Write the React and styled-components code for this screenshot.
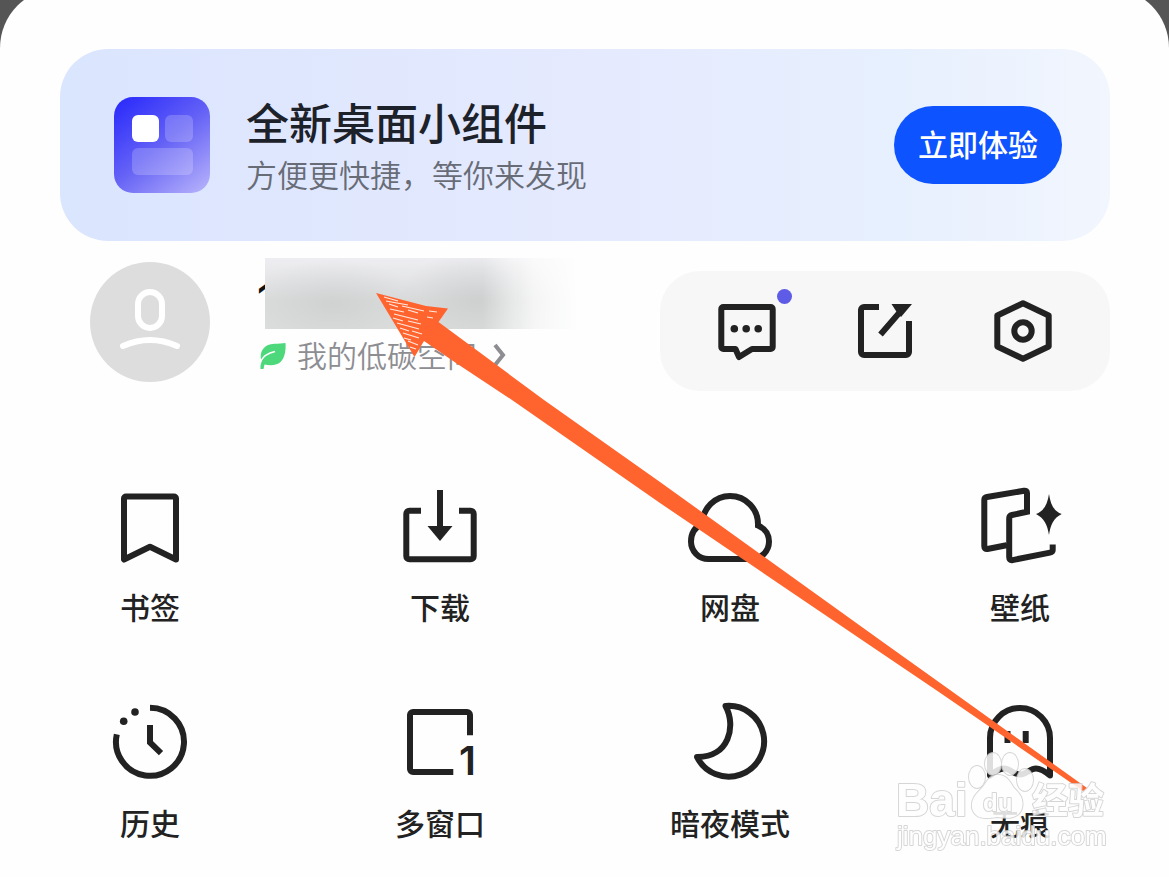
import React from 'react'
import styled, {createGlobalStyle} from "styled-components";

const GlobalStyle = createGlobalStyle`
  * {
    box-sizing: border-box;
  }
  body {
    margin: 0;
    background: #555;
    color: #222;
    font-family: "Noto Sans CJK SC", "Noto Sans", sans-serif;
  }
  button {
    padding: 0;
    border: 0;
    background: none;
    color: inherit;
    font: inherit;
    cursor: pointer;
  }
  svg {
    display: block;
  }
`;

const Sheet = styled.main`
  position: relative;
  min-height: calc(100vh + 12px);
  margin-top: -12px;
  padding: 61px 0 33px;
  border-radius: 60px 60px 0 0;
  background: #fefefe;
  overflow: hidden;
`;
const Banner = styled.section`
  display: flex;
  align-items: center;
  height: 192px;
  margin: 0 59px 0 60px;
  padding: 0 48px 0 54px;
  border-radius: 48px;
  background: linear-gradient(90deg, #dae5fe 0%, #e5eafe 50%, #e7f0fe 80%, #f2f6fe 100%);
`;
const BannerText = styled.div`
  flex: 1;
  margin-left: 36px;

  h1 {
    margin: 0;
    color: #1d2129;
    font-weight: 500;
    font-size: 43px;
    line-height: 58px;
  }

  p {
    margin: 0;
    color: #686c76;
    font-weight: 350;
    font-size: 31px;
    line-height: 48px;
  }
`;
const TryButton = styled.button`
  && {
    width: 168px;
    height: 78px;
    padding-bottom: 4px;
    border-radius: 39px;
    background: #0d53ff;
    color: #fff;
    font-weight: 500;
    font-size: 30px;
    line-height: 40px;
  }
`;

const Profile = styled.section`
  display: flex;
  align-items: flex-start;
  margin: 21px 59px 0 60px;
  padding-left: 30px;
`;
const Avatar = styled.div`
  width: 120px;
  height: 120px;
  border-radius: 50%;
  background: #ddd;
`;
const User = styled.div`
  flex: 1;
  margin-left: 47px;
`;
const Name = styled.div`
  position: relative;
  height: 68px;
  color: #111;
  font-family: Inter, "Noto Sans CJK SC", sans-serif;
  font-weight: 500;
  font-size: 42px;
  line-height: 76px;
`;
// hides the account number
const NameMask = styled.span`
  position: absolute;
  top: -4px;
  left: 8px;
  width: 320px;
  height: 71px;
  background:
    radial-gradient(ellipse 90px 44px at 68px 46px, rgba(200, 203, 203, 0.6) 0%, rgba(200, 203, 203, 0) 100%),
    radial-gradient(ellipse 80px 48px at 212px 42px, rgba(200, 203, 203, 0.7) 0%, rgba(200, 203, 203, 0) 100%),
    linear-gradient(180deg, #eeeef2 0%, #dcdddd 60%, #dcdede 100%);
  mask-image: linear-gradient(90deg, #000 68%, rgba(0, 0, 0, 0.25) 84%, transparent 98%);
`;
const SpaceLink = styled.a`
  display: flex;
  align-items: center;
  height: 50px;
  color: #8d8d92;
  font-weight: 350;
  font-size: 30px;
  line-height: 40px;
  text-decoration: none;

  span {
    margin: 0 16px 0 10px;
    padding-bottom: 2px;
  }
`;
const Toolbar = styled.nav`
  display: flex;
  justify-content: space-around;
  align-items: center;
  width: 450px;
  height: 120px;
  margin-top: 9px;
  padding: 0 18px;
  border-radius: 40px;
  background: #f7f7f7;
`;
const ToolButton = styled.button`
  position: relative;
`;
const Badge = styled.span`
  position: absolute;
  top: -6px;
  right: -9px;
  width: 15px;
  height: 15px;
  border-radius: 50%;
  background: #5e5ce6;
`;

const Menu = styled.nav`
  display: grid;
  grid-template-columns: repeat(4, 1fr);
  row-gap: 70px;
  padding: 89px 4px 0 5px;
`;
const MenuButton = styled.button`
  display: flex;
  flex-direction: column;
  align-items: center;
  gap: 10px;

  && {
    font-weight: 500;
    font-size: 30px;
    line-height: 40px;
  }
`;

const Pointer = styled.svg`
  position: absolute;
  top: 302px;
  left: 374px;
  pointer-events: none;
`;
const Watermark = styled.svg`
  position: absolute;
  top: 760px;
  left: 890px;
  pointer-events: none;
`;

const Icon = ({size = 96, children}) => (
    <svg width={size} height={size} viewBox={`0 0 ${size} ${size}`} fill="none"
         stroke="#222" strokeWidth="6" aria-hidden="true">
        {children}
    </svg>
)

const menuItems = [
    {
        label: '书签',
        icon: <path strokeLinejoin="round"
                    d="M22 79.5V18.5a2 2 0 0 1 2-2h48a2 2 0 0 1 2 2v61L48 66.8Z"/>
    },
    {
        label: '下载',
        icon: <>
            <path d="M29 30.7H17.3a3 3 0 0 0-3 3v42.6a3 3 0 0 0 3 3h61.4a3 3 0 0 0 3-3V33.7a3 3 0 0 0-3-3H67M48 10v38"/>
            <path stroke="none" fill="#222" d="M35.5 46h25L48 61Z"/>
        </>
    },
    {
        label: '网盘',
        icon: <path d="M20 43.5C21 28 33 16 48 16C64 16 76.500 29 76 45.500C83 48.500 87 54.500 87 61.500C87 71.500 79 79 69.500 79H26.500C16.500 79 9 71 9 61.500C9 53 13.500 47 20 43.500Z"/>
    },
    {
        label: '壁纸',
        icon: <>
            <path d="M34.5 65.3L15.5 69Q12.3 69.4 12.3 66.3V20Q12.3 17.6 15 17L52 10.8Q55 10.4 55 13.2V31.8L40 35Q37.2 35.6 37.2 38.4V77Q37.2 80.8 40.5 80.1L78 72.6Q80.7 72 80.7 70V64.5"/>
            <path stroke="none" fill="#222"
                  d="M77 14C78.5 24 81.5 31 89.7 34C81.5 38 78.5 45 77 55C75.5 45 72 38 64 34C72 31 75.5 24 77 14Z"/>
        </>
    },
    {
        label: '历史',
        icon: <>
            <path d="M48 11.8A34 34 0 1 1 14.8 38.4M48 29V46.5L59 57.2"/>
            <circle cx="21.7" cy="25.3" r="3.8" stroke="none" fill="#222"/>
            <circle cx="33" cy="16" r="3.8" stroke="none" fill="#222"/>
        </>
    },
    {
        label: '多窗口',
        icon: <>
            <path d="M78 39.3V19a3 3 0 0 0-3-3H21a3 3 0 0 0-3 3v54a3 3 0 0 0 3 3h40.3"/>
            <text x="84" y="79" textAnchor="end" stroke="none" fill="#222"
                  fontFamily="Inter, sans-serif" fontWeight="600" fontSize="40">1</text>
        </>
    },
    {
        label: '暗夜模式',
        icon: <path strokeLinejoin="round" d="M43.5 10C54.5 30 47 61.5 15 61A35.4 35.4 0 1 0 43.5 10Z"/>
    },
    {
        label: '无痕',
        icon: <path strokeLinejoin="round"
                    d="M18 79.5V42a30 30 0 0 1 60 0V79.5C72 74.5 68 72.5 64 72.5C58 72.5 55 78.5 48 78.5C41 78.5 38 72.5 32 72.5C28 72.5 24 74.5 18 79.5ZM35.5 35v12M53.7 35v12"/>
    },
]

const tools = [
    {
        label: '消息',
        badge: true,
        icon: <>
            <path strokeLinejoin="round"
                  d="M12.3 12h47.4a2 2 0 0 1 2 2v38a2 2 0 0 1-2 2H41L28 62L24.5 54H12.3a2 2 0 0 1-2-2V14a2 2 0 0 1 2-2Z"/>
            <g stroke="none" fill="#222">
                <circle cx="23.3" cy="33.7" r="3.8"/>
                <circle cx="35.2" cy="33.7" r="3.8"/>
                <circle cx="47.2" cy="33.7" r="3.8"/>
            </g>
        </>
    },
    {
        label: '分享',
        icon: <>
            <path d="M30 12H15a3 3 0 0 0-3 3v42a3 3 0 0 0 3 3h42a3 3 0 0 0 3-3V26M31.5 39.5L54 13.5"/>
            <path stroke="none" fill="#222" d="M42.5 9H63L52 22L47 16Z"/>
        </>
    },
    {
        label: '设置',
        icon: <>
            <path strokeLinejoin="round" d="M36 8.3L61.7 20.5V51.5L36 63.7L10.3 51.5V20.5Z"/>
            <circle cx="36" cy="36" r="8.7"/>
        </>
    },
]

const App = () => {
    const toolButtons = tools.map(tool => (
        <ToolButton key={tool.label} type="button" aria-label={tool.label}>
            <Icon size={72}>{tool.icon}</Icon>
            {tool.badge && <Badge/>}
        </ToolButton>
    ))
    const menuButtons = menuItems.map(item => (
        <MenuButton key={item.label} type="button">
            <Icon>{item.icon}</Icon>
            {item.label}
        </MenuButton>
    ))
    return (
        <>
            <GlobalStyle/>
            <Sheet>
                <Banner>
                    <svg width="96" height="96" aria-hidden="true">
                        <defs>
                            <linearGradient id="widget" x1="0.1" y1="0" x2="0.9" y2="1">
                                <stop offset="0" stopColor="#2b2cfb"/>
                                <stop offset="0.5" stopColor="#6562f6"/>
                                <stop offset="1" stopColor="#b2aefb"/>
                            </linearGradient>
                        </defs>
                        <rect width="96" height="96" rx="19" fill="url(#widget)"/>
                        <rect x="18" y="18" width="27" height="27" rx="6" fill="#fff"/>
                        <rect x="51" y="18" width="28" height="27" rx="6" fill="#fff" fillOpacity="0.2"/>
                        <rect x="18" y="51" width="61" height="27" rx="6" fill="#fff" fillOpacity="0.2"/>
                    </svg>
                    <BannerText>
                        <h1>全新桌面小组件</h1>
                        <p>方便更快捷，等你来发现</p>
                    </BannerText>
                    <TryButton type="button">立即体验</TryButton>
                </Banner>

                <Profile>
                    <Avatar>
                        <svg width="120" height="120" fill="none" stroke="#fff" strokeWidth="6" aria-hidden="true">
                            <rect x="48" y="30" width="24" height="36" rx="12"/>
                            <path strokeLinecap="round" d="M33 84Q60 72 87 84"/>
                        </svg>
                    </Avatar>
                    <User>
                        <Name>1<NameMask/></Name>
                        <SpaceLink href="#space">
                            <svg width="30" height="30" viewBox="0 0 30 30" aria-hidden="true">
                                <path fill="#4cd87b"
                                      d="M28.5 3C29 10 28 17 24 21.500C20.500 25.300 14 26 7.500 24.500L6.500 29H3.500C3.300 26 3.600 24 4.800 21.500C2.500 16 4 10 8.500 6.500C13.500 2.800 22 4.300 28.500 3Z"/>
                                <path fill="none" stroke="#fefefe" strokeWidth="1.500" d="M3.500 21.500C6 16.500 11 13 18 11.500"/>
                            </svg>
                            <span>我的低碳空间</span>
                            <svg width="14" height="24" fill="none" stroke="#8d8d92" strokeWidth="4" aria-hidden="true">
                                <path d="M2 2L10 12L2 22"/>
                            </svg>
                        </SpaceLink>
                    </User>
                    <Toolbar>{toolButtons}</Toolbar>
                </Profile>

                <Menu>{menuButtons}</Menu>

                <Pointer width="716" height="502" viewBox="374 290 716 502" aria-hidden="true">
                    <path fill="#ff642f"
                          d="M376 293L426 306L448 308.500L438.500 322L544 400L660 482L880 640L950 690L1087 788L1083 791L936 690L862 640L660 503L512 400L456 363L424 341L414.500 357Z"/>
                    <g stroke="#ffe9df" strokeWidth="1.200" fill="none">
                        <path d="M384 297l14 4M386 301l22 4M389 304l9 3M402 306l22 5M390 309l14 3M408 310l10 3"/>
                        <path d="M394 314l24 6M393 318l10 3M408 321l13 3M397 323l22 6M400 328l9 3M412 331l10 3"/>
                        <path d="M403 333l16 5M404 338l7 2M408 341l10 4M410 347l6 2M429 311l8 1M427 317l6 1"/>
                    </g>
                </Pointer>

                <Watermark width="220" height="110" viewBox="890 748 220 110" aria-hidden="true">
                    <g fill="#fff" stroke="#d0d0d0" strokeWidth="2" strokeLinejoin="round"
                       paintOrder="stroke" opacity="0.85">
                        <ellipse cx="977" cy="777" rx="8" ry="11"/>
                        <ellipse cx="993" cy="764" rx="8" ry="11"/>
                        <ellipse cx="1010" cy="764" rx="8" ry="11"/>
                        <ellipse cx="1025" cy="780" rx="8" ry="11"/>
                        <path d="M998 775C1007 775 1010 782 1014 788C1020 794 1024 799 1022 808C1019 818 1010 819 997 817C984 819 975 819 972 808C971 799 976 794 982 788C987 782 989 775 998 775Z"/>
                        <g fontFamily="Liberation Sans, sans-serif">
                            <text x="896" y="816" fontWeight="700" fontSize="46">Bai</text>
                            <text x="983" y="811" fontWeight="700" fontSize="24">du</text>
                            <text x="897" y="845" fontSize="26">jingyan.baidu.com</text>
                        </g>
                        <text x="1032" y="814" fontFamily="Noto Sans CJK SC, sans-serif" fontWeight="700"
                              fontSize="36">经验</text>
                    </g>
                </Watermark>
            </Sheet>
        </>
    )
}

export default App
